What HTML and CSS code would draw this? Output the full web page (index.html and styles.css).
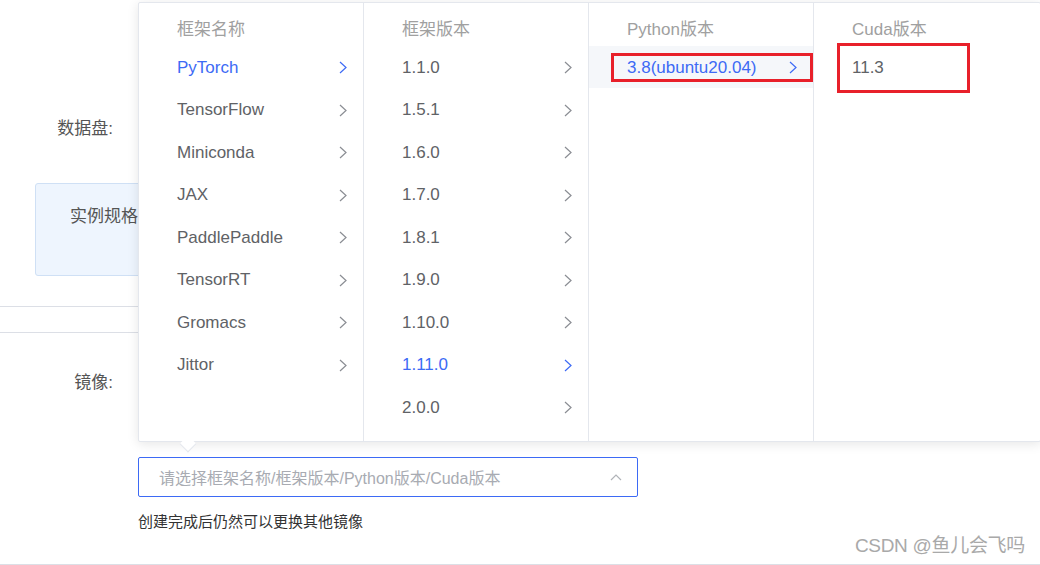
FILE: index.html
```html
<!DOCTYPE html>
<html lang="zh">
<head>
<meta charset="utf-8">
<title>镜像选择</title>
<link rel="stylesheet" href="styles.css">
</head>
<body>
<div class="page">
  <div class="peek">
    <span class="peek-a">规格</span>
    <span class="peek-b">数据 规格</span>
  </div>

  <div class="form-row disk-row">
    <label class="form-label">数据盘:</label>
  </div>

  <div class="spec-box">
    <span class="spec-title">实例规格:</span>
  </div>

  <div class="divider-band"></div>

  <div class="form-row mirror-row">
    <label class="form-label">镜像:</label>
    <div class="mirror-content">
      <div class="select">
        <span class="placeholder">请选择框架名称/框架版本/Python版本/Cuda版本</span>
        <svg class="select-arrow" width="12" height="8" viewBox="0 0 12 8"><polyline points="1,7 6,2 11,7" fill="none" stroke="#b0b3b8" stroke-width="1.2"/></svg>
      </div>
      <p class="help">创建完成后仍然可以更换其他镜像</p>
    </div>
  </div>

  <div class="cascader-panel">
    <div class="col">
      <div class="col-head">框架名称</div>
      <div class="item active"><span>PyTorch</span><svg class="chev" width="8" height="13" viewBox="0 0 8 13"><polyline points="1,1 7,6.5 1,12" fill="none" stroke="currentColor" stroke-width="1.2"/></svg></div>
      <div class="item"><span>TensorFlow</span><svg class="chev" width="8" height="13" viewBox="0 0 8 13"><polyline points="1,1 7,6.5 1,12" fill="none" stroke="currentColor" stroke-width="1.2"/></svg></div>
      <div class="item"><span>Miniconda</span><svg class="chev" width="8" height="13" viewBox="0 0 8 13"><polyline points="1,1 7,6.5 1,12" fill="none" stroke="currentColor" stroke-width="1.2"/></svg></div>
      <div class="item"><span>JAX</span><svg class="chev" width="8" height="13" viewBox="0 0 8 13"><polyline points="1,1 7,6.5 1,12" fill="none" stroke="currentColor" stroke-width="1.2"/></svg></div>
      <div class="item"><span>PaddlePaddle</span><svg class="chev" width="8" height="13" viewBox="0 0 8 13"><polyline points="1,1 7,6.5 1,12" fill="none" stroke="currentColor" stroke-width="1.2"/></svg></div>
      <div class="item"><span>TensorRT</span><svg class="chev" width="8" height="13" viewBox="0 0 8 13"><polyline points="1,1 7,6.5 1,12" fill="none" stroke="currentColor" stroke-width="1.2"/></svg></div>
      <div class="item"><span>Gromacs</span><svg class="chev" width="8" height="13" viewBox="0 0 8 13"><polyline points="1,1 7,6.5 1,12" fill="none" stroke="currentColor" stroke-width="1.2"/></svg></div>
      <div class="item"><span>Jittor</span><svg class="chev" width="8" height="13" viewBox="0 0 8 13"><polyline points="1,1 7,6.5 1,12" fill="none" stroke="currentColor" stroke-width="1.2"/></svg></div>
    </div>
    <div class="col">
      <div class="col-head">框架版本</div>
      <div class="item"><span>1.1.0</span><svg class="chev" width="8" height="13" viewBox="0 0 8 13"><polyline points="1,1 7,6.5 1,12" fill="none" stroke="currentColor" stroke-width="1.2"/></svg></div>
      <div class="item"><span>1.5.1</span><svg class="chev" width="8" height="13" viewBox="0 0 8 13"><polyline points="1,1 7,6.5 1,12" fill="none" stroke="currentColor" stroke-width="1.2"/></svg></div>
      <div class="item"><span>1.6.0</span><svg class="chev" width="8" height="13" viewBox="0 0 8 13"><polyline points="1,1 7,6.5 1,12" fill="none" stroke="currentColor" stroke-width="1.2"/></svg></div>
      <div class="item"><span>1.7.0</span><svg class="chev" width="8" height="13" viewBox="0 0 8 13"><polyline points="1,1 7,6.5 1,12" fill="none" stroke="currentColor" stroke-width="1.2"/></svg></div>
      <div class="item"><span>1.8.1</span><svg class="chev" width="8" height="13" viewBox="0 0 8 13"><polyline points="1,1 7,6.5 1,12" fill="none" stroke="currentColor" stroke-width="1.2"/></svg></div>
      <div class="item"><span>1.9.0</span><svg class="chev" width="8" height="13" viewBox="0 0 8 13"><polyline points="1,1 7,6.5 1,12" fill="none" stroke="currentColor" stroke-width="1.2"/></svg></div>
      <div class="item"><span>1.10.0</span><svg class="chev" width="8" height="13" viewBox="0 0 8 13"><polyline points="1,1 7,6.5 1,12" fill="none" stroke="currentColor" stroke-width="1.2"/></svg></div>
      <div class="item active"><span>1.11.0</span><svg class="chev" width="8" height="13" viewBox="0 0 8 13"><polyline points="1,1 7,6.5 1,12" fill="none" stroke="currentColor" stroke-width="1.2"/></svg></div>
      <div class="item"><span>2.0.0</span><svg class="chev" width="8" height="13" viewBox="0 0 8 13"><polyline points="1,1 7,6.5 1,12" fill="none" stroke="currentColor" stroke-width="1.2"/></svg></div>
    </div>
    <div class="col">
      <div class="col-head">Python版本</div>
      <div class="item active hovered"><span>3.8(ubuntu20.04)</span><svg class="chev" width="8" height="13" viewBox="0 0 8 13"><polyline points="1,1 7,6.5 1,12" fill="none" stroke="currentColor" stroke-width="1.2"/></svg><i class="mark mark-py"></i></div>
    </div>
    <div class="col col-last">
      <div class="col-head">Cuda版本</div>
      <div class="item"><span>11.3</span><i class="mark mark-cuda"></i></div>
    </div>
    <i class="panel-arrow"></i>
  </div>

  <div class="watermark">CSDN @鱼儿会飞吗</div>
</div>
</body>
</html>
```

FILE: styles.css
```css
* { box-sizing: border-box; }
html, body { margin: 0; padding: 0; background: #fff; }
body {
  font-family: "Liberation Sans", Arial, "Noto Sans CJK SC", sans-serif;
  color: #606266;
}
.page {
  position: relative;
  width: 1040px;
  height: 565px;
  overflow: hidden;
  display: flex;
  flex-direction: column;
}

/* clipped text peeking above the panel */
.peek {
  height: 3px;
  overflow: hidden;
  display: flex;
  font-size: 17px;
  color: #333;
}
.peek span { display: block; line-height: 20px; margin-top: -17px; }
.peek-a { margin-left: 296px; }
.peek-b { margin-left: 300px; }

.form-row { display: flex; }
.form-label {
  width: 113px;
  flex: none;
  text-align: right;
  font-size: 17px;
  line-height: 24px;
  color: #555;
  font-family: "Liberation Sans", "Noto Sans CJK SC", sans-serif;
}
.disk-row { margin-top: 114px; }

.spec-box {
  margin-top: 42px;
  margin-left: 35px;
  width: 600px;
  height: 93px;
  background: #eef5fe;
  border: 1px solid #cfe0f5;
  border-radius: 3px;
  padding: 22px 0 0 34px;
}
.spec-title { font-size: 17px; line-height: 22px; color: #555; }

.divider-band {
  margin-top: 30px;
  height: 27px;
  border-top: 1px solid #dcdfe6;
  border-bottom: 1px solid #dcdfe6;
}

.mirror-row { margin-top: 38px; flex: 1; border-bottom: 1px solid #dcdfe6; }
.mirror-content { margin-left: 25px; padding-top: 86px; }
.select {
  width: 500px;
  height: 40px;
  border: 1px solid #3d6af5;
  border-radius: 2px;
  display: flex;
  align-items: center;
  justify-content: space-between;
  padding: 0 15px 0 20px;
}
.placeholder { font-size: 16px; color: #a8abb2; }
.select-arrow { display: block; }
.help {
  margin: 15px 0 0;
  font-size: 15px;
  line-height: 20px;
  color: #333;
}

/* cascader dropdown overlay */
.cascader-panel {
  position: absolute;
  left: 138px;
  top: 2px;
  width: 903px;
  height: 440px;
  background: #fff;
  border: 1px solid #e4e7ed;
  border-radius: 2px;
  box-shadow: 0 2px 12px rgba(0, 0, 0, 0.1);
  display: flex;
}
.col {
  width: 225px;
  flex: none;
  border-right: 1px solid #e4e7ed;
  padding-top: 7px;
}
.col-last { flex: 1; border-right: none; }
.col-head {
  height: 36px;
  line-height: 40px;
  padding-left: 38px;
  font-size: 17px;
  color: #a0a0a0;
}
.item {
  position: relative;
  height: 42.5px;
  display: flex;
  align-items: center;
  justify-content: space-between;
  padding: 1px 16px 0 38px;
  font-size: 17px;
  color: #606266;
}
.item .chev { color: #8a8d93; display: block; }
.item.active { color: #3d6af5; }
.item.active .chev { color: #3d6af5; }
.item.hovered { background: #f5f7fa; height: 42px; }

.mark {
  position: absolute;
  border: 3px solid #e8202a;
}
.mark-py { left: 22px; right: 0; top: 7px; bottom: 6px; }
.mark-cuda { left: 23px; width: 133px; top: -3px; bottom: -4px; }

.panel-arrow {
  position: absolute;
  left: 43px;
  bottom: -9px;
  width: 12px;
  height: 12px;
  background: #fff;
  border-right: 1px solid #e4e7ed;
  border-bottom: 1px solid #e4e7ed;
  transform: rotate(45deg);
}

.watermark {
  position: absolute;
  right: 15px;
  top: 533px;
  font-size: 19px;
  line-height: 26px;
  color: #a9a9a9;
  font-family: "Liberation Sans", "Noto Sans CJK SC", sans-serif;
  letter-spacing: -0.3px;
}
```
